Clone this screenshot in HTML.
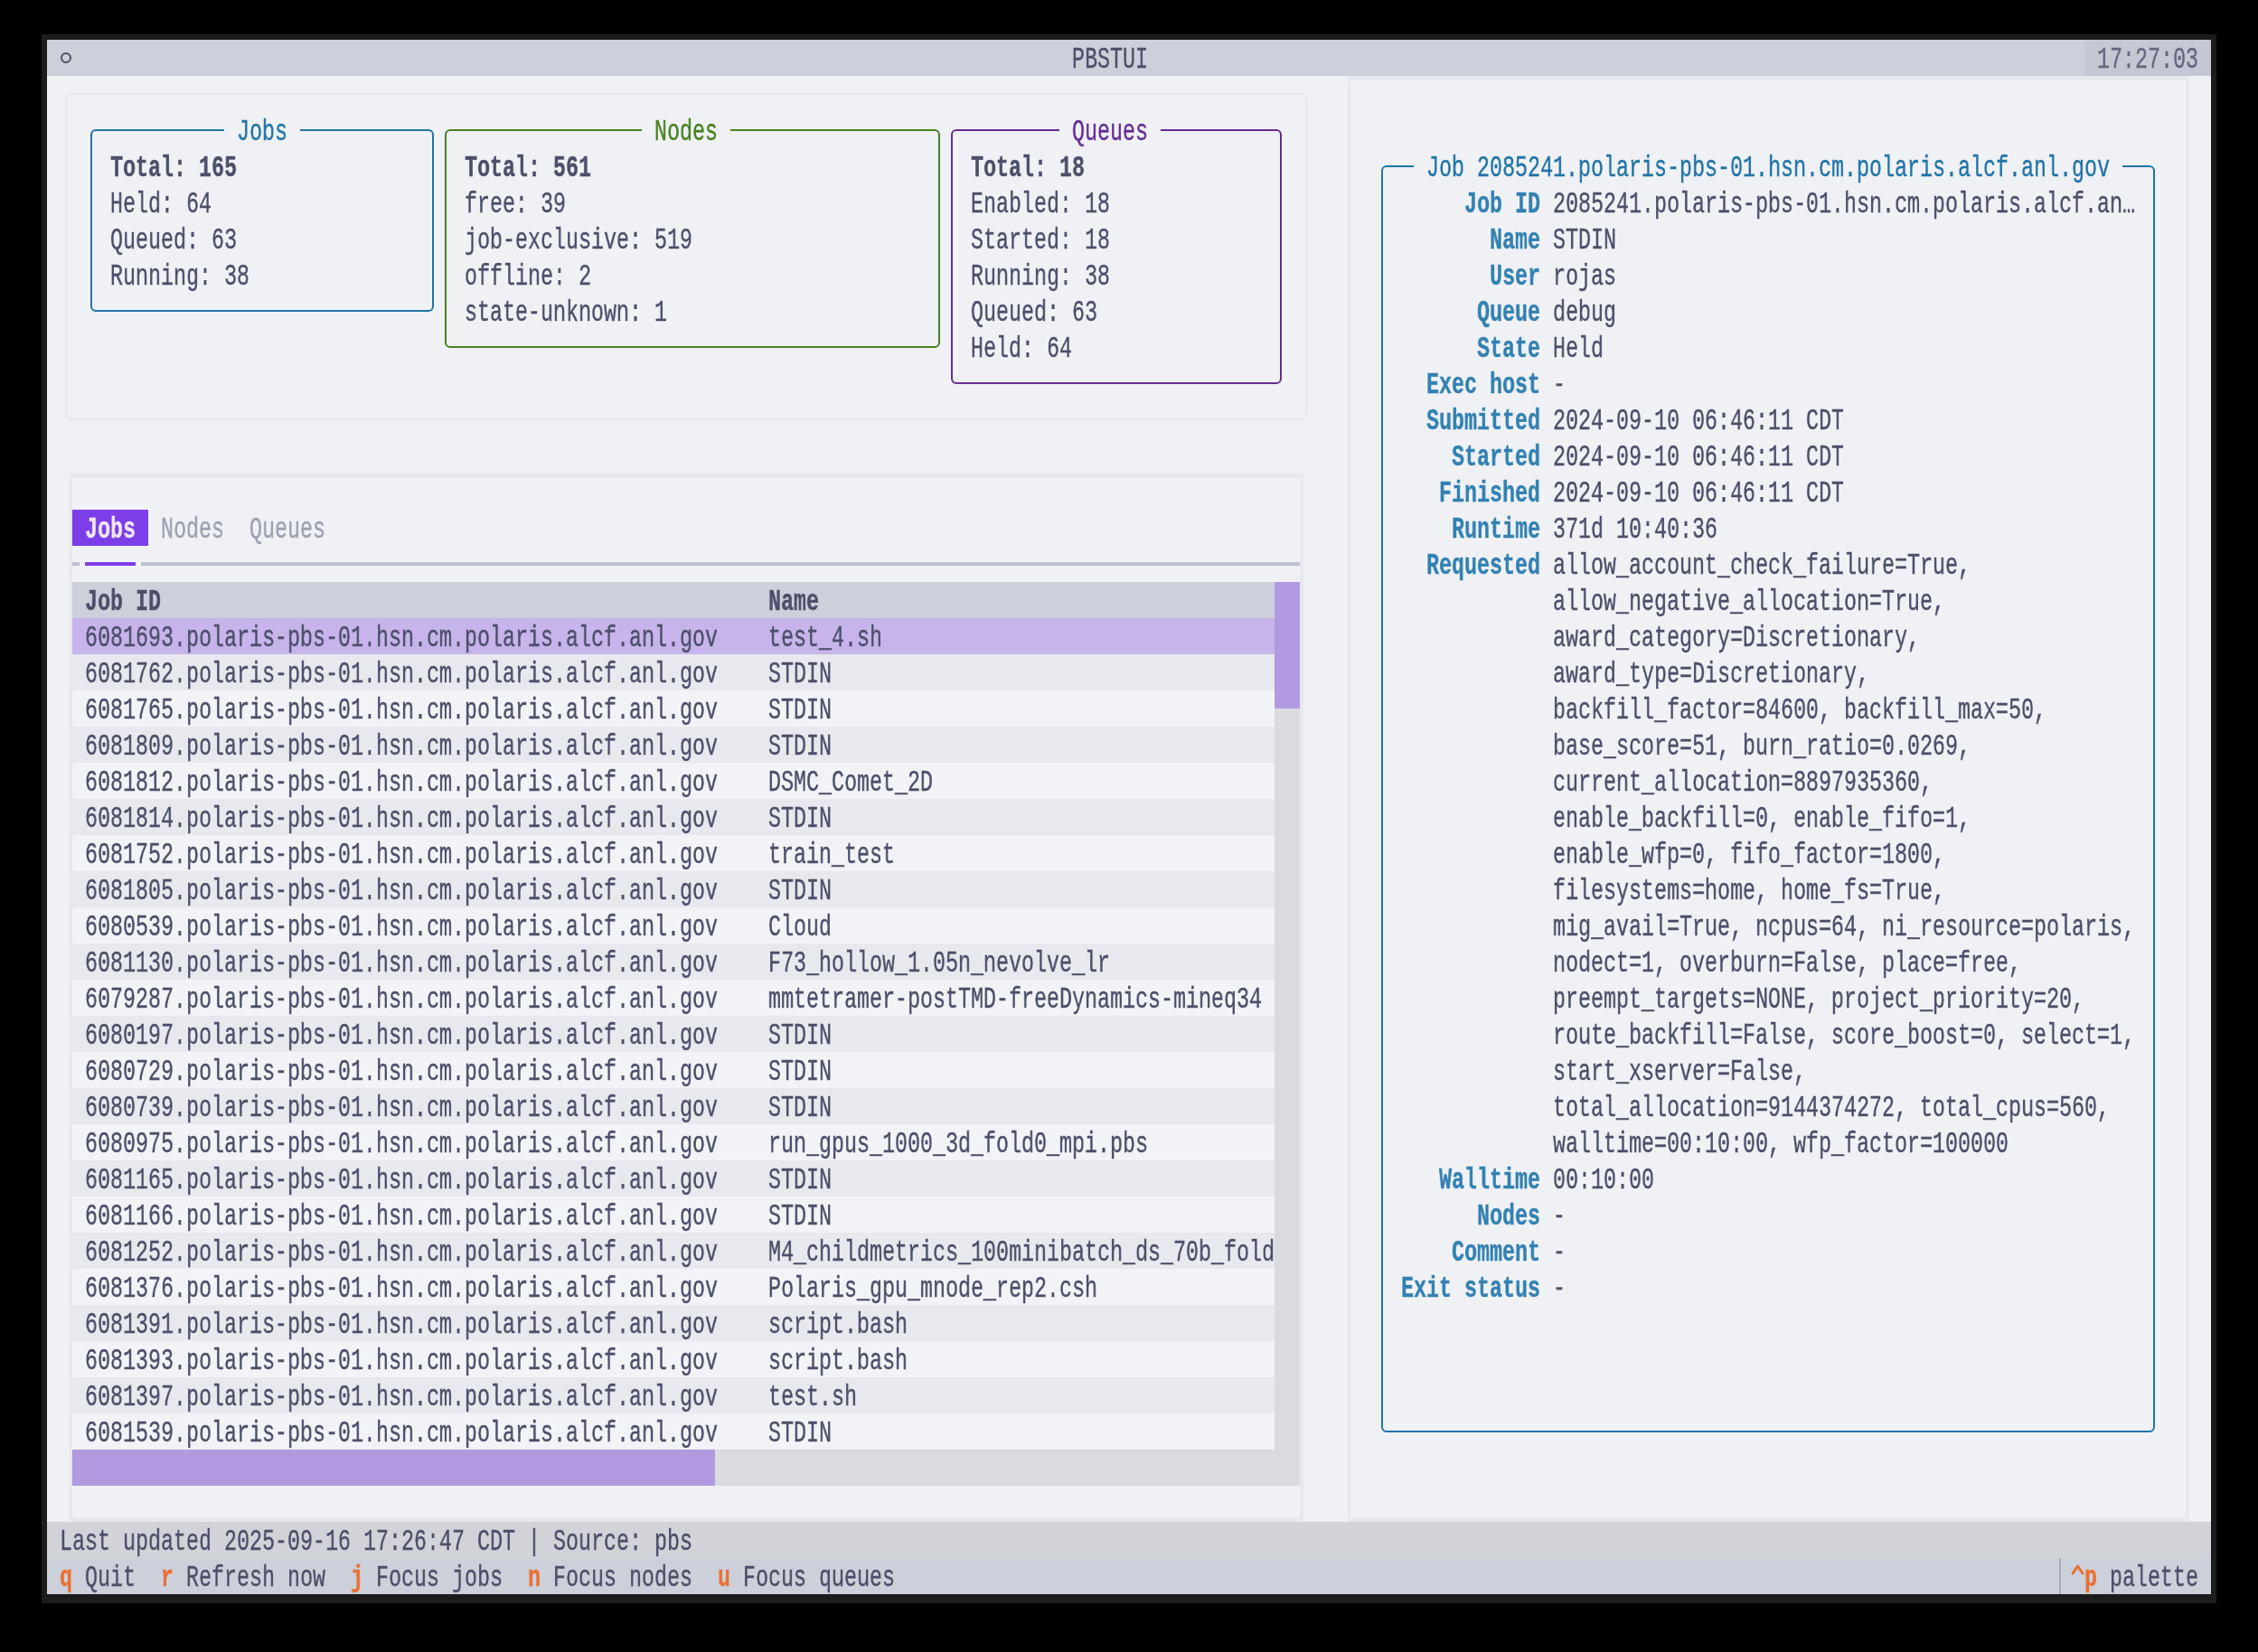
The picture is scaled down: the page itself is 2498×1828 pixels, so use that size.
<!DOCTYPE html>
<html><head><meta charset="utf-8"><title>PBSTUI</title>
<style>
html,body{margin:0;padding:0;width:2498px;height:1828px;overflow:hidden;background:#000;}
.frame{position:absolute;left:46px;top:38px;width:2406px;height:1736px;background:#1c1c1c;}
.app{position:absolute;left:52px;top:44px;width:2394px;height:1720px;background:#eff1f5;overflow:hidden;}
.r{position:absolute;}
.t{position:absolute;white-space:pre;font-family:"Liberation Mono",monospace;font-size:34.0px;line-height:40px;height:40px;transform:scaleX(0.686163);transform-origin:0 0;will-change:transform;-webkit-text-stroke:0.4px currentColor;}
</style></head><body>
<div class="frame"></div>
<div class="app"></div>
<div style="position:absolute;left:0;top:0;width:2498px;height:1828px;">
<div class="r" style="left:52px;top:44px;width:2394px;height:40px;background:#cdd0da;"></div>
<div class="r" style="left:2306px;top:44px;width:140px;height:40px;background:#c5c8d4;"></div>
<div class="r" style="left:67px;top:58px;width:12px;height:12px;border:2px solid #4c4f69;border-radius:50%;box-sizing:border-box"></div>
<div class="t" style="left:1186px;top:46.0px;color:#4c4f69;">PBSTUI</div>
<div class="t" style="left:2320px;top:46.0px;color:#646880;">17:27:03</div>
<div class="r" style="left:72px;top:103px;width:1374px;height:362px;border:2px solid #e7e8ed;border-radius:6px;box-sizing:border-box"></div>
<div class="r" style="left:100px;top:143px;width:380px;height:202px;border:2px solid #2274a5;border-radius:6px;box-sizing:border-box"></div>
<div class="r" style="left:248px;top:143px;width:84px;height:2px;background:#eff1f5;"></div>
<div class="t" style="left:262px;top:126.0px;color:#2274a5;">Jobs</div>
<div class="t" style="left:122px;top:166.0px;color:#4c4f69;font-weight:bold;">Total: 165</div>
<div class="t" style="left:122px;top:206.0px;color:#4c4f69;">Held: 64</div>
<div class="t" style="left:122px;top:246.0px;color:#4c4f69;">Queued: 63</div>
<div class="t" style="left:122px;top:286.0px;color:#4c4f69;">Running: 38</div>
<div class="r" style="left:492px;top:143px;width:548px;height:242px;border:2px solid #478220;border-radius:6px;box-sizing:border-box"></div>
<div class="r" style="left:710px;top:143px;width:98px;height:2px;background:#eff1f5;"></div>
<div class="t" style="left:724px;top:126.0px;color:#478220;">Nodes</div>
<div class="t" style="left:514px;top:166.0px;color:#4c4f69;font-weight:bold;">Total: 561</div>
<div class="t" style="left:514px;top:206.0px;color:#4c4f69;">free: 39</div>
<div class="t" style="left:514px;top:246.0px;color:#4c4f69;">job-exclusive: 519</div>
<div class="t" style="left:514px;top:286.0px;color:#4c4f69;">offline: 2</div>
<div class="t" style="left:514px;top:326.0px;color:#4c4f69;">state-unknown: 1</div>
<div class="r" style="left:1052px;top:143px;width:366px;height:282px;border:2px solid #662d91;border-radius:6px;box-sizing:border-box"></div>
<div class="r" style="left:1172px;top:143px;width:112px;height:2px;background:#eff1f5;"></div>
<div class="t" style="left:1186px;top:126.0px;color:#662d91;">Queues</div>
<div class="t" style="left:1074px;top:166.0px;color:#4c4f69;font-weight:bold;">Total: 18</div>
<div class="t" style="left:1074px;top:206.0px;color:#4c4f69;">Enabled: 18</div>
<div class="t" style="left:1074px;top:246.0px;color:#4c4f69;">Started: 18</div>
<div class="t" style="left:1074px;top:286.0px;color:#4c4f69;">Running: 38</div>
<div class="t" style="left:1074px;top:326.0px;color:#4c4f69;">Queued: 63</div>
<div class="t" style="left:1074px;top:366.0px;color:#4c4f69;">Held: 64</div>
<div class="r" style="left:76.5px;top:524px;width:3.5px;height:1160px;background:#e7e8ed;"></div>
<div class="r" style="left:1438px;top:524px;width:3.5px;height:1160px;background:#e7e8ed;"></div>
<div class="r" style="left:80px;top:524px;width:1358px;height:5px;background:#e7e8ed;"></div>
<div class="r" style="left:80px;top:1679px;width:1358px;height:5px;background:#e7e8ed;"></div>
<div class="r" style="left:80px;top:564px;width:84px;height:40px;background:#7c3ee6;"></div>
<div class="t" style="left:94px;top:566.0px;color:#f0e8fb;font-weight:bold;">Jobs</div>
<div class="t" style="left:178px;top:566.0px;color:#9ca0b0;">Nodes</div>
<div class="t" style="left:276px;top:566.0px;color:#9ca0b0;">Queues</div>
<div class="r" style="left:80px;top:622px;width:8px;height:4px;background:#bcc0cc;"></div>
<div class="r" style="left:94px;top:622px;width:56px;height:4px;background:#7c3ee6;"></div>
<div class="r" style="left:156px;top:622px;width:1282px;height:4px;background:#bcc0cc;"></div>
<div class="r" style="left:80px;top:644px;width:1330px;height:40px;background:#ccd0da;"></div>
<div class="t" style="left:94px;top:646.0px;color:#4c4f69;font-weight:bold;">Job ID</div>
<div class="t" style="left:850px;top:646.0px;color:#4c4f69;font-weight:bold;">Name</div>
<div class="r" style="left:80px;top:684px;width:1330px;height:40px;background:#c6b4ea;"></div>
<div class="t" style="left:94px;top:686.0px;color:#4c4f69;">6081693.polaris-pbs-01.hsn.cm.polaris.alcf.anl.gov</div>
<div class="t" style="left:850px;top:686.0px;color:#4c4f69;">test_4.sh</div>
<div class="r" style="left:80px;top:724px;width:1330px;height:40px;background:#e7e9ee;"></div>
<div class="t" style="left:94px;top:726.0px;color:#4c4f69;">6081762.polaris-pbs-01.hsn.cm.polaris.alcf.anl.gov</div>
<div class="t" style="left:850px;top:726.0px;color:#4c4f69;">STDIN</div>
<div class="r" style="left:80px;top:764px;width:1330px;height:40px;background:#f2f3f6;"></div>
<div class="t" style="left:94px;top:766.0px;color:#4c4f69;">6081765.polaris-pbs-01.hsn.cm.polaris.alcf.anl.gov</div>
<div class="t" style="left:850px;top:766.0px;color:#4c4f69;">STDIN</div>
<div class="r" style="left:80px;top:804px;width:1330px;height:40px;background:#e7e9ee;"></div>
<div class="t" style="left:94px;top:806.0px;color:#4c4f69;">6081809.polaris-pbs-01.hsn.cm.polaris.alcf.anl.gov</div>
<div class="t" style="left:850px;top:806.0px;color:#4c4f69;">STDIN</div>
<div class="r" style="left:80px;top:844px;width:1330px;height:40px;background:#f2f3f6;"></div>
<div class="t" style="left:94px;top:846.0px;color:#4c4f69;">6081812.polaris-pbs-01.hsn.cm.polaris.alcf.anl.gov</div>
<div class="t" style="left:850px;top:846.0px;color:#4c4f69;">DSMC_Comet_2D</div>
<div class="r" style="left:80px;top:884px;width:1330px;height:40px;background:#e7e9ee;"></div>
<div class="t" style="left:94px;top:886.0px;color:#4c4f69;">6081814.polaris-pbs-01.hsn.cm.polaris.alcf.anl.gov</div>
<div class="t" style="left:850px;top:886.0px;color:#4c4f69;">STDIN</div>
<div class="r" style="left:80px;top:924px;width:1330px;height:40px;background:#f2f3f6;"></div>
<div class="t" style="left:94px;top:926.0px;color:#4c4f69;">6081752.polaris-pbs-01.hsn.cm.polaris.alcf.anl.gov</div>
<div class="t" style="left:850px;top:926.0px;color:#4c4f69;">train_test</div>
<div class="r" style="left:80px;top:964px;width:1330px;height:40px;background:#e7e9ee;"></div>
<div class="t" style="left:94px;top:966.0px;color:#4c4f69;">6081805.polaris-pbs-01.hsn.cm.polaris.alcf.anl.gov</div>
<div class="t" style="left:850px;top:966.0px;color:#4c4f69;">STDIN</div>
<div class="r" style="left:80px;top:1004px;width:1330px;height:40px;background:#f2f3f6;"></div>
<div class="t" style="left:94px;top:1006.0px;color:#4c4f69;">6080539.polaris-pbs-01.hsn.cm.polaris.alcf.anl.gov</div>
<div class="t" style="left:850px;top:1006.0px;color:#4c4f69;">Cloud</div>
<div class="r" style="left:80px;top:1044px;width:1330px;height:40px;background:#e7e9ee;"></div>
<div class="t" style="left:94px;top:1046.0px;color:#4c4f69;">6081130.polaris-pbs-01.hsn.cm.polaris.alcf.anl.gov</div>
<div class="t" style="left:850px;top:1046.0px;color:#4c4f69;">F73_hollow_1.05n_nevolve_lr</div>
<div class="r" style="left:80px;top:1084px;width:1330px;height:40px;background:#f2f3f6;"></div>
<div class="t" style="left:94px;top:1086.0px;color:#4c4f69;">6079287.polaris-pbs-01.hsn.cm.polaris.alcf.anl.gov</div>
<div class="t" style="left:850px;top:1086.0px;color:#4c4f69;">mmtetramer-postTMD-freeDynamics-mineq34</div>
<div class="r" style="left:80px;top:1124px;width:1330px;height:40px;background:#e7e9ee;"></div>
<div class="t" style="left:94px;top:1126.0px;color:#4c4f69;">6080197.polaris-pbs-01.hsn.cm.polaris.alcf.anl.gov</div>
<div class="t" style="left:850px;top:1126.0px;color:#4c4f69;">STDIN</div>
<div class="r" style="left:80px;top:1164px;width:1330px;height:40px;background:#f2f3f6;"></div>
<div class="t" style="left:94px;top:1166.0px;color:#4c4f69;">6080729.polaris-pbs-01.hsn.cm.polaris.alcf.anl.gov</div>
<div class="t" style="left:850px;top:1166.0px;color:#4c4f69;">STDIN</div>
<div class="r" style="left:80px;top:1204px;width:1330px;height:40px;background:#e7e9ee;"></div>
<div class="t" style="left:94px;top:1206.0px;color:#4c4f69;">6080739.polaris-pbs-01.hsn.cm.polaris.alcf.anl.gov</div>
<div class="t" style="left:850px;top:1206.0px;color:#4c4f69;">STDIN</div>
<div class="r" style="left:80px;top:1244px;width:1330px;height:40px;background:#f2f3f6;"></div>
<div class="t" style="left:94px;top:1246.0px;color:#4c4f69;">6080975.polaris-pbs-01.hsn.cm.polaris.alcf.anl.gov</div>
<div class="t" style="left:850px;top:1246.0px;color:#4c4f69;">run_gpus_1000_3d_fold0_mpi.pbs</div>
<div class="r" style="left:80px;top:1284px;width:1330px;height:40px;background:#e7e9ee;"></div>
<div class="t" style="left:94px;top:1286.0px;color:#4c4f69;">6081165.polaris-pbs-01.hsn.cm.polaris.alcf.anl.gov</div>
<div class="t" style="left:850px;top:1286.0px;color:#4c4f69;">STDIN</div>
<div class="r" style="left:80px;top:1324px;width:1330px;height:40px;background:#f2f3f6;"></div>
<div class="t" style="left:94px;top:1326.0px;color:#4c4f69;">6081166.polaris-pbs-01.hsn.cm.polaris.alcf.anl.gov</div>
<div class="t" style="left:850px;top:1326.0px;color:#4c4f69;">STDIN</div>
<div class="r" style="left:80px;top:1364px;width:1330px;height:40px;background:#e7e9ee;"></div>
<div class="t" style="left:94px;top:1366.0px;color:#4c4f69;">6081252.polaris-pbs-01.hsn.cm.polaris.alcf.anl.gov</div>
<div class="t" style="left:850px;top:1366.0px;color:#4c4f69;">M4_childmetrics_100minibatch_ds_70b_fold</div>
<div class="r" style="left:80px;top:1404px;width:1330px;height:40px;background:#f2f3f6;"></div>
<div class="t" style="left:94px;top:1406.0px;color:#4c4f69;">6081376.polaris-pbs-01.hsn.cm.polaris.alcf.anl.gov</div>
<div class="t" style="left:850px;top:1406.0px;color:#4c4f69;">Polaris_gpu_mnode_rep2.csh</div>
<div class="r" style="left:80px;top:1444px;width:1330px;height:40px;background:#e7e9ee;"></div>
<div class="t" style="left:94px;top:1446.0px;color:#4c4f69;">6081391.polaris-pbs-01.hsn.cm.polaris.alcf.anl.gov</div>
<div class="t" style="left:850px;top:1446.0px;color:#4c4f69;">script.bash</div>
<div class="r" style="left:80px;top:1484px;width:1330px;height:40px;background:#f2f3f6;"></div>
<div class="t" style="left:94px;top:1486.0px;color:#4c4f69;">6081393.polaris-pbs-01.hsn.cm.polaris.alcf.anl.gov</div>
<div class="t" style="left:850px;top:1486.0px;color:#4c4f69;">script.bash</div>
<div class="r" style="left:80px;top:1524px;width:1330px;height:40px;background:#e7e9ee;"></div>
<div class="t" style="left:94px;top:1526.0px;color:#4c4f69;">6081397.polaris-pbs-01.hsn.cm.polaris.alcf.anl.gov</div>
<div class="t" style="left:850px;top:1526.0px;color:#4c4f69;">test.sh</div>
<div class="r" style="left:80px;top:1564px;width:1330px;height:40px;background:#f2f3f6;"></div>
<div class="t" style="left:94px;top:1566.0px;color:#4c4f69;">6081539.polaris-pbs-01.hsn.cm.polaris.alcf.anl.gov</div>
<div class="t" style="left:850px;top:1566.0px;color:#4c4f69;">STDIN</div>
<div class="r" style="left:1410px;top:644px;width:28px;height:1000px;background:#dadbdf;"></div>
<div class="r" style="left:1410px;top:644px;width:28px;height:140px;background:#b19ae0;"></div>
<div class="r" style="left:80px;top:1604px;width:1330px;height:40px;background:#dadbdf;"></div>
<div class="r" style="left:80px;top:1604px;width:711px;height:40px;background:#b19ae0;"></div>
<div class="r" style="left:1490.5px;top:84px;width:3.5px;height:1600px;background:#e7e8ed;"></div>
<div class="r" style="left:2418px;top:84px;width:3.5px;height:1600px;background:#e7e8ed;"></div>
<div class="r" style="left:1494px;top:84px;width:924px;height:5px;background:#e7e8ed;"></div>
<div class="r" style="left:1494px;top:1679px;width:924px;height:5px;background:#e7e8ed;"></div>
<div class="r" style="left:1528px;top:183px;width:856px;height:1402px;border:2px solid #2274a5;border-radius:6px;box-sizing:border-box"></div>
<div class="r" style="left:1564px;top:183px;width:784px;height:2px;background:#eff1f5;"></div>
<div class="t" style="left:1578px;top:166.0px;color:#2274a5;">Job 2085241.polaris-pbs-01.hsn.cm.polaris.alcf.anl.gov</div>
<div class="t" style="left:1620px;top:206.0px;color:#3381b1;font-weight:bold;">Job ID</div>
<div class="t" style="left:1718px;top:206.0px;color:#4c4f69;">2085241.polaris-pbs-01.hsn.cm.polaris.alcf.an…</div>
<div class="t" style="left:1648px;top:246.0px;color:#3381b1;font-weight:bold;">Name</div>
<div class="t" style="left:1718px;top:246.0px;color:#4c4f69;">STDIN</div>
<div class="t" style="left:1648px;top:286.0px;color:#3381b1;font-weight:bold;">User</div>
<div class="t" style="left:1718px;top:286.0px;color:#4c4f69;">rojas</div>
<div class="t" style="left:1634px;top:326.0px;color:#3381b1;font-weight:bold;">Queue</div>
<div class="t" style="left:1718px;top:326.0px;color:#4c4f69;">debug</div>
<div class="t" style="left:1634px;top:366.0px;color:#3381b1;font-weight:bold;">State</div>
<div class="t" style="left:1718px;top:366.0px;color:#4c4f69;">Held</div>
<div class="t" style="left:1578px;top:406.0px;color:#3381b1;font-weight:bold;">Exec host</div>
<div class="t" style="left:1718px;top:406.0px;color:#4c4f69;">-</div>
<div class="t" style="left:1578px;top:446.0px;color:#3381b1;font-weight:bold;">Submitted</div>
<div class="t" style="left:1718px;top:446.0px;color:#4c4f69;">2024-09-10 06:46:11 CDT</div>
<div class="t" style="left:1606px;top:486.0px;color:#3381b1;font-weight:bold;">Started</div>
<div class="t" style="left:1718px;top:486.0px;color:#4c4f69;">2024-09-10 06:46:11 CDT</div>
<div class="t" style="left:1592px;top:526.0px;color:#3381b1;font-weight:bold;">Finished</div>
<div class="t" style="left:1718px;top:526.0px;color:#4c4f69;">2024-09-10 06:46:11 CDT</div>
<div class="t" style="left:1606px;top:566.0px;color:#3381b1;font-weight:bold;">Runtime</div>
<div class="t" style="left:1718px;top:566.0px;color:#4c4f69;">371d 10:40:36</div>
<div class="t" style="left:1578px;top:606.0px;color:#3381b1;font-weight:bold;">Requested</div>
<div class="t" style="left:1718px;top:606.0px;color:#4c4f69;">allow_account_check_failure=True,</div>
<div class="t" style="left:1718px;top:646.0px;color:#4c4f69;">allow_negative_allocation=True,</div>
<div class="t" style="left:1718px;top:686.0px;color:#4c4f69;">award_category=Discretionary,</div>
<div class="t" style="left:1718px;top:726.0px;color:#4c4f69;">award_type=Discretionary,</div>
<div class="t" style="left:1718px;top:766.0px;color:#4c4f69;">backfill_factor=84600, backfill_max=50,</div>
<div class="t" style="left:1718px;top:806.0px;color:#4c4f69;">base_score=51, burn_ratio=0.0269,</div>
<div class="t" style="left:1718px;top:846.0px;color:#4c4f69;">current_allocation=8897935360,</div>
<div class="t" style="left:1718px;top:886.0px;color:#4c4f69;">enable_backfill=0, enable_fifo=1,</div>
<div class="t" style="left:1718px;top:926.0px;color:#4c4f69;">enable_wfp=0, fifo_factor=1800,</div>
<div class="t" style="left:1718px;top:966.0px;color:#4c4f69;">filesystems=home, home_fs=True,</div>
<div class="t" style="left:1718px;top:1006.0px;color:#4c4f69;">mig_avail=True, ncpus=64, ni_resource=polaris,</div>
<div class="t" style="left:1718px;top:1046.0px;color:#4c4f69;">nodect=1, overburn=False, place=free,</div>
<div class="t" style="left:1718px;top:1086.0px;color:#4c4f69;">preempt_targets=NONE, project_priority=20,</div>
<div class="t" style="left:1718px;top:1126.0px;color:#4c4f69;">route_backfill=False, score_boost=0, select=1,</div>
<div class="t" style="left:1718px;top:1166.0px;color:#4c4f69;">start_xserver=False,</div>
<div class="t" style="left:1718px;top:1206.0px;color:#4c4f69;">total_allocation=9144374272, total_cpus=560,</div>
<div class="t" style="left:1718px;top:1246.0px;color:#4c4f69;">walltime=00:10:00, wfp_factor=100000</div>
<div class="t" style="left:1592px;top:1286.0px;color:#3381b1;font-weight:bold;">Walltime</div>
<div class="t" style="left:1718px;top:1286.0px;color:#4c4f69;">00:10:00</div>
<div class="t" style="left:1634px;top:1326.0px;color:#3381b1;font-weight:bold;">Nodes</div>
<div class="t" style="left:1718px;top:1326.0px;color:#4c4f69;">-</div>
<div class="t" style="left:1606px;top:1366.0px;color:#3381b1;font-weight:bold;">Comment</div>
<div class="t" style="left:1718px;top:1366.0px;color:#4c4f69;">-</div>
<div class="t" style="left:1550px;top:1406.0px;color:#3381b1;font-weight:bold;">Exit status</div>
<div class="t" style="left:1718px;top:1406.0px;color:#4c4f69;">-</div>
<div class="r" style="left:52px;top:1684px;width:2394px;height:40px;background:#d2d3d9;"></div>
<div class="t" style="left:66px;top:1686.0px;color:#4c4f69;">Last updated 2025-09-16 17:26:47 CDT | Source: pbs</div>
<div class="r" style="left:52px;top:1724px;width:2394px;height:40px;background:#ccd0da;"></div>
<div class="t" style="left:66px;top:1726.0px;color:#ec6f33;font-weight:bold;">q</div>
<div class="t" style="left:178px;top:1726.0px;color:#ec6f33;font-weight:bold;">r</div>
<div class="t" style="left:388px;top:1726.0px;color:#ec6f33;font-weight:bold;">j</div>
<div class="t" style="left:584px;top:1726.0px;color:#ec6f33;font-weight:bold;">n</div>
<div class="t" style="left:794px;top:1726.0px;color:#ec6f33;font-weight:bold;">u</div>
<div class="t" style="left:94px;top:1726.0px;color:#4c4f69;">Quit</div>
<div class="t" style="left:206px;top:1726.0px;color:#4c4f69;">Refresh now</div>
<div class="t" style="left:416px;top:1726.0px;color:#4c4f69;">Focus jobs</div>
<div class="t" style="left:612px;top:1726.0px;color:#4c4f69;">Focus nodes</div>
<div class="t" style="left:822px;top:1726.0px;color:#4c4f69;">Focus queues</div>
<div class="r" style="left:2278px;top:1724px;width:2px;height:40px;background:#a8acbc;"></div>
<svg class="r" style="left:2291px;top:1730px" width="15" height="13" viewBox="0 0 15 13"><polyline points="2,11 7.5,3 13,11" fill="none" stroke="#ec6f33" stroke-width="3" stroke-linecap="round" stroke-linejoin="round"/></svg>
<div class="t" style="left:2306px;top:1726.0px;color:#ec6f33;font-weight:bold;">p</div>
<div class="t" style="left:2334px;top:1726.0px;color:#4c4f69;">palette</div>
</div>
</body></html>
